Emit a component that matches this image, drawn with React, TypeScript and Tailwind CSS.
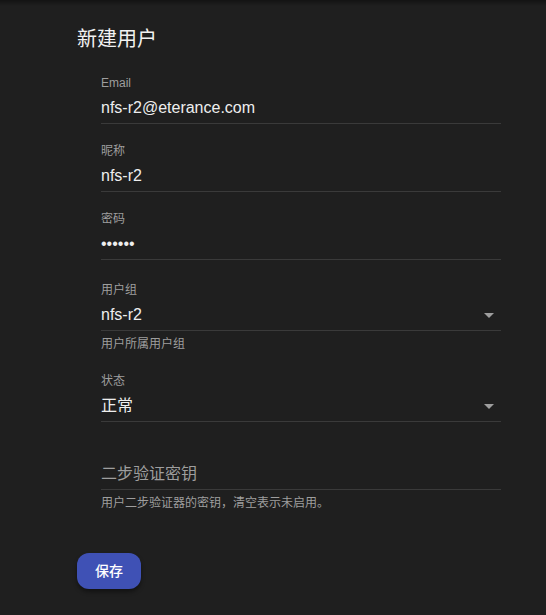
import React from "react";

type FieldProps = {
  label?: string;
  value?: string;
  placeholder?: string;
  helper?: string;
  select?: boolean;
  className?: string;
};

function ArrowDrop() {
  return (
    <svg
      viewBox="0 0 24 24"
      className="absolute right-0 top-[4px] h-6 w-6 fill-[#9e9e9e]"
    >
      <path d="M7 10l5 5 5-5z" />
    </svg>
  );
}

function Field({ label, value, placeholder, helper, select, className }: FieldProps) {
  return (
    <div className={className}>
      <div className="pt-4 relative">
        {label && (
          <div className="absolute left-0 top-[1px] text-[12px] leading-[12px] text-[#9e9e9e]">
            {label}
          </div>
        )}
        <div className="relative h-8 border-b border-[#3a3a3a] pt-[6px]">
          {value ? (
            <div className="text-[16px] leading-[19px] text-[#eeeeee]">{value}</div>
          ) : (
            <div className="text-[16px] leading-[19px] text-[#9e9e9e]">{placeholder}</div>
          )}
          {select && <ArrowDrop />}
        </div>
      </div>
      {helper && (
        <p className="mt-[3px] text-[12px] leading-[20px] text-[#9e9e9e]">{helper}</p>
      )}
    </div>
  );
}

export default function App() {
  return (
    <div className="relative min-h-[615px] bg-[#1f1f1f] font-['Liberation_Sans','Noto_Sans_CJK_SC',sans-serif]">
      <div className="pointer-events-none absolute inset-x-0 top-0 h-[6px] bg-gradient-to-b from-black/40 to-transparent" />
      <div className="pl-[77px] pt-[25px]">
        <h2 className="text-[20px] leading-[28px] text-[#f2f2f2]">新建用户</h2>
        <div className="ml-6 w-[400px] pt-[23px]">
          <Field label="Email" value="nfs-r2@eterance.com" />
          <Field className="mt-5" label="昵称" value="nfs-r2" />
          <Field className="mt-5" label="密码" value="••••••" />
          <Field
            className="mt-[23px]"
            label="用户组"
            value="nfs-r2"
            helper="用户所属用户组"
            select
          />
          <Field className="mt-5" label="状态" value="正常" select />
          <Field
            className="mt-5"
            placeholder="二步验证密钥"
            helper="用户二步验证器的密钥，清空表示未启用。"
          />
        </div>
        <button
          type="button"
          className="mt-10 h-9 w-16 rounded-[12px] bg-[#3f51b5] text-[14px] font-medium text-white shadow-[0_3px_4px_rgba(0,0,0,0.4)]"
        >
          保存
        </button>
      </div>
    </div>
  );
}
